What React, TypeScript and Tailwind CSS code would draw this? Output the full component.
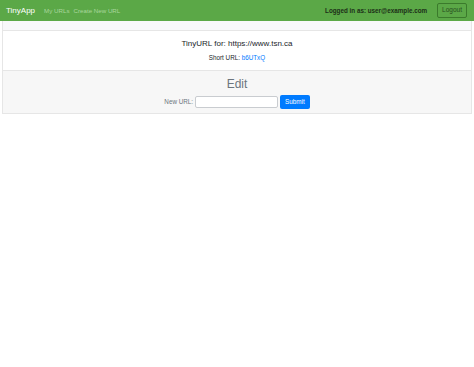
export default function App() {
  return (
    <div className="min-h-screen bg-white font-['Liberation_Sans',Arial,sans-serif]">
      <nav className="flex h-[21px] items-center bg-[#5ba847] pl-[6px] pr-[7px]">
        <span className="text-[8px] text-white">TinyApp</span>
        <div className="ml-[9px] flex gap-[4px] text-[6.2px] text-[#a9d69d]">
          <a href="#">My URLs</a>
          <a href="#">Create New URL</a>
        </div>
        <span className="ml-auto text-[6.3px] font-bold text-[#1c2e17]">Logged in as: user@example.com</span>
        <button className="ml-[10px] h-[15px] rounded-[2px] border border-[#3b7a2c] px-[4px] text-[6.5px] leading-none text-[#294d21]">
          Logout
        </button>
      </nav>
      <div className="mx-[2px] border border-[#e6e6e6] border-t-0">
        <div className="h-[10px] border-b border-[#e6e6e6] bg-[#f8f8fa]" />
        <div className="flex h-[39px] flex-col items-center pt-[7px]">
          <h2 className="text-[8px] leading-[12px] text-[#212529]">TinyURL for: https://www.tsn.ca</h2>
          <p className="mt-[3px] text-[6.3px] leading-[9px] text-[#212529]">
            Short URL: <a href="#" className="text-[#007bff]">b6UTxQ</a>
          </p>
        </div>
        <div className="flex h-[43px] flex-col items-center border-t border-[#e6e6e6] bg-[#f7f7f7] pt-[6px]">
          <h3 className="text-[12px] leading-[15px] text-[#6c757d]">Edit</h3>
          <form className="mt-[3px] flex items-center" onSubmit={(e) => e.preventDefault()}>
            <label className="mr-[2px] text-[6.3px] text-[#6c757d]">New URL:</label>
            <input className="h-[12px] w-[83px] rounded-[2px] border border-[#c9ccd0] bg-white" />
            <button className="ml-[2px] h-[14px] rounded-[2px] bg-[#007bff] px-[5px] text-[6.3px] text-white">
              Submit
            </button>
          </form>
        </div>
      </div>
    </div>
  );
}
